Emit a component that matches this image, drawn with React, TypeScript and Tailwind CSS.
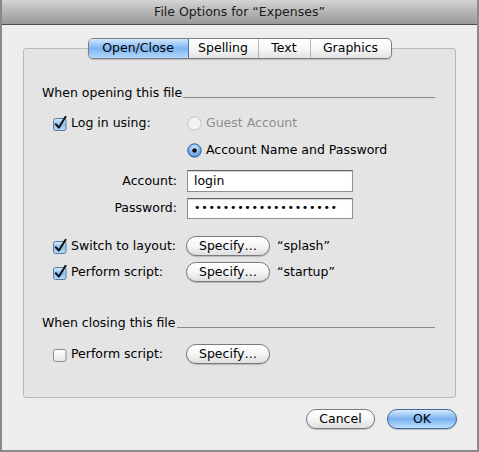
import React from "react";

const font = { fontFamily: '"DejaVu Sans", "Liberation Sans", sans-serif' };

function CheckBox({ checked }: { checked: boolean }) {
  return (
    <svg width="14" height="15" viewBox="0 0 14 15" className="shrink-0">
      <defs>
        <linearGradient id="cbBlue" x1="0" y1="0" x2="0" y2="1">
          <stop offset="0" stopColor="#d9ebfd" />
          <stop offset="0.5" stopColor="#8dc0f3" />
          <stop offset="1" stopColor="#b9dcfa" />
        </linearGradient>
        <linearGradient id="cbWhite" x1="0" y1="0" x2="0" y2="1">
          <stop offset="0" stopColor="#ffffff" />
          <stop offset="1" stopColor="#e6e6e6" />
        </linearGradient>
      </defs>
      <rect
        x="0.5"
        y="2.5"
        width="12.5"
        height="12"
        rx="2"
        fill={checked ? "url(#cbBlue)" : "url(#cbWhite)"}
        stroke={checked ? "#5b7aa3" : "#8c8c8c"}
      />
      {checked && (
        <path d="M2.8 8.2 L5.8 11.6 L12.6 0.8" fill="none" stroke="#111" strokeWidth="2" strokeLinecap="round" strokeLinejoin="round" />
      )}
    </svg>
  );
}

function Radio({ on, disabled }: { on?: boolean; disabled?: boolean }) {
  return (
    <svg width="15" height="15" viewBox="0 0 15 15" className="shrink-0">
      <defs>
        <radialGradient id="rdBlue" cx="0.5" cy="0.35" r="0.65">
          <stop offset="0" stopColor="#e2f0fe" />
          <stop offset="0.6" stopColor="#7fb6f0" />
          <stop offset="1" stopColor="#4f8fdc" />
        </radialGradient>
      </defs>
      <circle
        cx="7.5"
        cy="7.5"
        r="6.7"
        fill={on ? "url(#rdBlue)" : disabled ? "#f2f2f2" : "#fff"}
        stroke={on ? "#3d5f8e" : disabled ? "#c2c2c2" : "#8c8c8c"}
      />
      {on && <circle cx="7.5" cy="7.5" r="2.3" fill="#111" />}
    </svg>
  );
}

function AquaButton({ label, w, primary }: { label: string; w: string; primary?: boolean }) {
  return (
    <div
      className={`${w} h-[20px] flex items-center justify-center rounded-full border text-[12.5px] text-black shadow-[0_1px_1px_rgba(0,0,0,0.2)] ${
        primary
          ? "border-[#3e659c] bg-gradient-to-b from-[#d6e9fc] via-[#78b2f0] to-[#bfe0fc]"
          : "border-[#7a7a7a] bg-gradient-to-b from-white via-[#f6f6f6] to-[#dedede]"
      }`}
    >
      {label}
    </div>
  );
}

function Heading({ text }: { text: string }) {
  return (
    <div className="flex h-[18px] items-center">
      <span className="text-[12.5px] text-black whitespace-nowrap">{text}</span>
      <div className="ml-[1px] h-px flex-1 self-end mb-[4px] bg-[#8a8a8a]" />
    </div>
  );
}

function CheckRow({ checked, label, children, className }: { checked: boolean; label: string; children?: React.ReactNode; className?: string }) {
  return (
    <div className={`flex h-[22px] items-center pl-[11px] ${className ?? ""}`}>
      <div className="flex w-[133px] items-center gap-[4px]">
        <CheckBox checked={checked} />
        <span className="text-[12.5px] text-black whitespace-nowrap">{label}</span>
      </div>
      {children}
    </div>
  );
}

export default function App() {
  const tabs = ["Open/Close", "Spelling", "Text", "Graphics"];
  const tabW = ["w-[100px]", "w-[70px]", "w-[52px]", "w-[80px]"];

  return (
    <div style={font} className="w-[479px] h-[452px] flex flex-col border-x-2 border-b-2 border-[#8a8a8a] bg-[#ededed] overflow-hidden">
      {/* Title bar */}
      <div className="h-[25px] shrink-0 flex items-center justify-center border-b border-[#4d4d4d] bg-gradient-to-b from-[#d4d4d4] via-[#b5b5b5] to-[#999999] text-[12.5px] text-[#1a1a1a]">
        File Options for “Expenses”
      </div>

      <div className="flex flex-col px-[21px] pt-[13px]">
        {/* Tabs */}
        <div className="relative z-10 flex h-[21px] justify-center">
          <div className="flex h-[21px] rounded-[5px] border border-[#7f7f7f] bg-gradient-to-b from-white via-[#f7f7f7] to-[#e2e2e2] shadow-[0_1px_1px_rgba(0,0,0,0.2)] overflow-hidden">
            {tabs.map((t, i) => (
              <div
                key={t}
                className={`${tabW[i]} flex items-center justify-center text-[12.5px] text-black ${
                  i === 0
                    ? "bg-gradient-to-b from-[#d3e7fc] via-[#7cb5f1] to-[#b3d8fa] border-r border-[#4f74a6]"
                    : i < tabs.length - 1
                    ? "border-r border-[#b5b5b5]"
                    : ""
                }`}
              >
                {t}
              </div>
            ))}
          </div>
        </div>

        {/* Panel */}
        <div className="-mt-[11px] h-[350px] rounded-[3px] border border-[#b9b9b9] bg-[#e4e4e4] pl-[18px] pr-[20px] pt-[35px]">
          <Heading text="When opening this file" />

          <CheckRow checked label="Log in using:" className="mt-[10px]">
            <div className="flex items-center gap-[4px] ml-[1px]">
              <Radio disabled />
              <span className="text-[12.5px] text-[#8e8e8e]">Guest Account</span>
            </div>
          </CheckRow>

          <div className="mt-[5px] flex h-[22px] items-center pl-[145px]">
            <div className="flex items-center gap-[4px]">
              <Radio on />
              <span className="text-[12.5px] text-black">Account Name and Password</span>
            </div>
          </div>

          <div className="mt-[9px] flex h-[22px] items-center">
            <span className="w-[135px] text-right text-[12.5px] text-black">Account:</span>
            <div className="ml-[10px] h-[22px] w-[166px] flex items-center border border-[#8f8f8f] border-t-[#626262] bg-white pl-[6px] text-[12.5px] text-black shadow-[inset_0_1px_1px_rgba(0,0,0,0.18)]">
              login
            </div>
          </div>

          <div className="mt-[6px] flex h-[21px] items-center">
            <span className="w-[135px] text-right text-[12.5px] text-black">Password:</span>
            <div className="ml-[10px] h-[21px] w-[166px] flex items-center overflow-hidden border border-[#8f8f8f] border-t-[#626262] bg-white pl-[6px] text-[11px] tracking-[0.7px] text-black shadow-[inset_0_1px_1px_rgba(0,0,0,0.18)]">
              ••••••••••••••••••••
            </div>
          </div>

          <CheckRow checked label="Switch to layout:" className="mt-[16px]">
            <AquaButton label="Specify…" w="w-[84px]" />
            <span className="ml-[7px] text-[12.5px] text-black">“splash”</span>
          </CheckRow>

          <CheckRow checked label="Perform script:" className="mt-[4px]">
            <AquaButton label="Specify…" w="w-[84px]" />
            <span className="ml-[7px] text-[12.5px] text-black">“startup”</span>
          </CheckRow>

          <div className="mt-[31px]">
            <Heading text="When closing this file" />
          </div>

          <CheckRow checked={false} label="Perform script:" className="mt-[11px]">
            <AquaButton label="Specify…" w="w-[84px]" />
          </CheckRow>
        </div>

        {/* Footer buttons */}
        <div className="mt-[11px] flex justify-end gap-[12px] -mr-px">
          <AquaButton label="Cancel" w="w-[69px]" />
          <AquaButton label="OK" w="w-[70px]" primary />
        </div>
      </div>
    </div>
  );
}
